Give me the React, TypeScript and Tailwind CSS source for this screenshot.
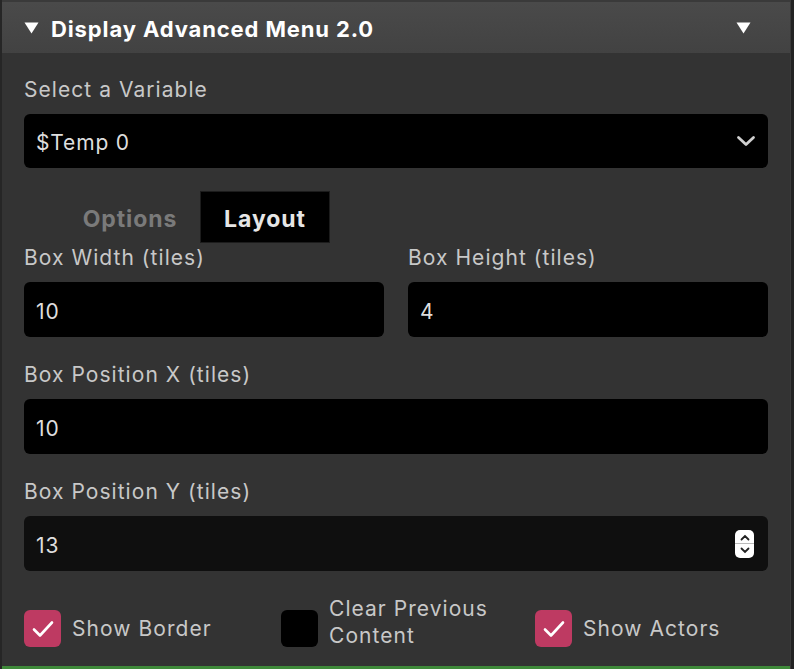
import { useState } from 'react'

const font = { fontFamily: 'Inter, "Noto Sans", sans-serif' }

function Triangle() {
    return (
        <svg width="15" height="12" viewBox="0 0 15 12" className="shrink-0">
            <path d="M0.5 0.5 H14.5 L7.5 11.5 Z" fill="#fff" />
        </svg>
    )
}

function Field({ label, value, spinner, className }: { label: string; value: string; spinner?: boolean; className?: string }) {
    return (
        <div className={className}>
            <div className="h-6 leading-6 text-[21px] tracking-[0.05em] text-[#c8c8c8]">{label}</div>
            <div
                className={`mt-3 h-[55px] rounded-[6px] flex items-center pl-3 pr-[14px] text-[21px] tracking-[0.04em] text-[#dedede] ${
                    spinner ? 'bg-[#0f0f0f]' : 'bg-black'
                }`}
            >
                <span className="flex-1 pt-[4px]">{value}</span>
                {spinner && (
                    <div className="w-[19px] h-[28px] rounded-[5px] bg-white flex flex-col items-center justify-between py-[4px]">
                        <svg width="10" height="7" viewBox="0 0 10 7">
                            <path d="M1.5 5.5 L5 2 L8.5 5.5" stroke="#222" strokeWidth="1.8" fill="none" strokeLinecap="round" />
                        </svg>
                        <div className="w-full h-px bg-[#bbb]" />
                        <svg width="10" height="7" viewBox="0 0 10 7">
                            <path d="M1.5 1.5 L5 5 L8.5 1.5" stroke="#222" strokeWidth="1.8" fill="none" strokeLinecap="round" />
                        </svg>
                    </div>
                )}
            </div>
        </div>
    )
}

function Check({ checked, label, twoLine }: { checked: boolean; label: React.ReactNode; twoLine?: boolean }) {
    return (
        <div className="flex items-start gap-[11px]">
            <div
                className={`w-[37px] h-[37px] rounded-[6px] flex items-center justify-center shrink-0 ${
                    checked ? 'bg-[#be3a62]' : 'bg-black'
                }`}
            >
                {checked && (
                    <svg width="24" height="20" viewBox="0 0 24 20">
                        <path d="M3 10.5 L9 16.5 L21 3.5" stroke="#fff" strokeWidth="2.6" fill="none" strokeLinecap="round" strokeLinejoin="round" />
                    </svg>
                )}
            </div>
            <div
                className={`text-[21px] tracking-[0.05em] text-[#c8c8c8] ${
                    twoLine ? 'leading-[27px] -mt-[15px]' : 'leading-[37px]'
                }`}
            >
                {label}
            </div>
        </div>
    )
}

export default function App() {
    const [tab, setTab] = useState('Layout')

    return (
        <div style={font} className="w-[794px] h-[669px] bg-[#333333] flex overflow-hidden">
            <div className="w-[2px] bg-[#262626]" />
            <div className="flex-1 flex flex-col">
                {/* header */}
                <div className="h-[2px] bg-[#3a3a3a]" />
                <div className="h-[51px] bg-gradient-to-b from-[#4a4a4a] to-[#424242] flex items-center pl-[22px] pr-[39px]">
                    <Triangle />
                    <span className="ml-[12px] pt-[3px] flex-1 text-[22px] tracking-[0.04em] font-bold text-white">
                        Display Advanced Menu 2.0
                    </span>
                    <Triangle />
                </div>

                <div className="flex-1 flex flex-col px-[22px]">
                    <div className="mt-[25px] h-6 leading-6 text-[21px] tracking-[0.05em] text-[#c8c8c8]">Select a Variable</div>
                    <div className="mt-3 h-[54px] rounded-[6px] bg-black flex items-center pl-3 pr-[12px] text-[21px] tracking-[0.04em] text-[#dedede]">
                        <span className="flex-1 pt-[3px]">$Temp 0</span>
                        <svg width="20" height="12" viewBox="0 0 20 12">
                            <path d="M2.5 2.5 L10 9.5 L17.5 2.5" stroke="#d0d0d0" strokeWidth="2.8" fill="none" strokeLinecap="round" strokeLinejoin="round" />
                        </svg>
                    </div>

                    {/* tabs */}
                    <div className="mt-[23px] flex gap-[5px] ml-[41px]">
                        {['Options', 'Layout'].map((t) => (
                            <button
                                key={t}
                                onClick={() => setTab(t)}
                                className={`w-[130px] h-[52px] pt-[4px] text-[23px] tracking-[0.04em] font-bold border ${
                                    tab === t ? 'bg-black border-[#1c1c1c] text-[#e6e6e6]' : 'border-transparent text-[#7a7a7a]'
                                }`}
                            >
                                {t}
                            </button>
                        ))}
                    </div>

                    <div className="mt-[3px] flex gap-[24px]">
                        <Field className="flex-1" label="Box Width (tiles)" value="10" />
                        <Field className="flex-1" label="Box Height (tiles)" value="4" />
                    </div>
                    <Field className="mt-[26px]" label="Box Position X (tiles)" value="10" />
                    <Field className="mt-[26px]" label="Box Position Y (tiles)" value="13" spinner />

                    <div className="mt-[39px] flex items-start">
                        <div className="w-[257px]">
                            <Check checked label="Show Border" />
                        </div>
                        <div className="w-[254px]">
                            <Check checked={false} twoLine label={<>Clear Previous<br />Content</>} />
                        </div>
                        <Check checked label="Show Actors" />
                    </div>
                </div>
                <div className="h-[3px] bg-[#3f8a3a]" />
            </div>
            <div className="w-[4px] bg-[#232323] border-l border-[#3a3a3a]" />
        </div>
    )
}
